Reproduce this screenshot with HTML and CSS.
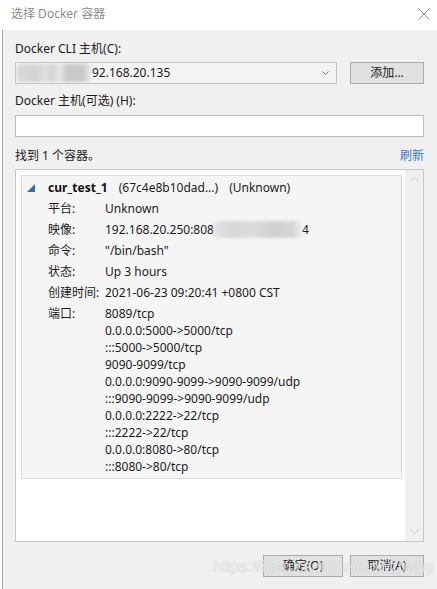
FILE: index.html
```html
<!DOCTYPE html>
<html lang="zh-CN">
<head>
<meta charset="utf-8">
<title>选择 Docker 容器</title>
<link rel="stylesheet" href="styles.css">
</head>
<body>
<div class="window">
  <div class="titlebar">
    <span class="title">选择 Docker 容器</span>
    <svg class="close" width="12" height="12" viewBox="0 0 12 12"><path d="M0.5 0.5 L11.5 11.5 M11.5 0.5 L0.5 11.5" stroke="#9a9a9a" stroke-width="1" fill="none"/></svg>
  </div>
  <div class="main">
    <div class="label l1">Docker CLI 主机(C):</div>
    <div class="row">
      <div class="combo">
        <span class="blur blur-host"></span>
        <span class="combo-text">92.168.20.135</span>
        <svg class="chev" width="7" height="5" viewBox="0 0 7 5"><polyline points="0.5,0.5 3.5,3.5 6.5,0.5" stroke="#707070" stroke-width="1" fill="none"/></svg>
      </div>
      <button class="btn btn-add">添加...</button>
    </div>
    <div class="label l2">Docker 主机(可选) (H):</div>
    <div class="input"></div>
    <div class="found-row">
      <span>找到 1 个容器。</span>
      <span class="refresh">刷新</span>
    </div>
    <div class="listbox">
      <div class="list-content">
        <div class="item">
          <div class="item-head">
            <svg class="tri" width="8" height="8" viewBox="0 0 8 8"><path d="M8 0 L8 8 L0 8 Z" fill="#2f6cb8"/></svg>
            <span class="name">cur_test_1</span>
            <span>(67c4e8b10dad...)</span>
            <span>(Unknown)</span>
          </div>
          <div class="props">
            <div class="prop"><span class="k">平台:</span><span class="v">Unknown</span></div>
            <div class="prop"><span class="k">映像:</span><span class="v">192.168.20.250:808<span class="blur blur-img"></span>4</span></div>
            <div class="prop"><span class="k">命令:</span><span class="v">"/bin/bash"</span></div>
            <div class="prop"><span class="k">状态:</span><span class="v">Up 3 hours</span></div>
            <div class="prop"><span class="k">创建时间:</span><span class="v">2021-06-23 09:20:41 +0800 CST</span></div>
            <div class="prop ports"><span class="k">端口:</span>
              <div class="v port-list">
                <div>8089/tcp</div>
                <div>0.0.0.0:5000-&gt;5000/tcp</div>
                <div>:::5000-&gt;5000/tcp</div>
                <div>9090-9099/tcp</div>
                <div>0.0.0.0:9090-9099-&gt;9090-9099/udp</div>
                <div>:::9090-9099-&gt;9090-9099/udp</div>
                <div>0.0.0.0:2222-&gt;22/tcp</div>
                <div>:::2222-&gt;22/tcp</div>
                <div>0.0.0.0:8080-&gt;80/tcp</div>
                <div>:::8080-&gt;80/tcp</div>
              </div>
            </div>
          </div>
        </div>
      </div>
      <div class="scrollbar">
        <svg width="9" height="5" viewBox="0 0 9 5"><polyline points="0.5,4.5 4.5,0.5 8.5,4.5" stroke="#c6c6c6" stroke-width="1" fill="none"/></svg>
        <svg width="9" height="5" viewBox="0 0 9 5"><polyline points="0.5,0.5 4.5,4.5 8.5,0.5" stroke="#c6c6c6" stroke-width="1" fill="none"/></svg>
      </div>
    </div>
    <div class="actions">
      <button class="btn btn-ok">确定(O)</button>
      <button class="btn btn-cancel">取消(A)</button>
    </div>
  </div>
  <div class="watermark">https://blog.csdn.net/nowzhang</div>
</div>
</body>
</html>
```
FILE: styles.css
```css
html, body {
  margin: 0;
  padding: 0;
}
body {
  background: #f0f0f0;
  font-family: "Noto Sans", "Noto Sans CJK SC", sans-serif;
  font-size: 12px;
  color: #1b1b1b;
}
.window {
  width: 437px;
  height: 589px;
  display: flex;
  flex-direction: column;
  background: #fff;
  position: relative;
  overflow: hidden;
}
.titlebar {
  height: 30px;
  flex: none;
  background: #fff;
  display: flex;
  align-items: center;
  justify-content: space-between;
  padding: 0 7px 0 11px;
  box-sizing: border-box;
}
.title {
  color: #8c8c8c;
  font-size: 12px;
  line-height: 16px;
  margin-top: -2px;
}
.close {
  margin-top: -3px;
}
.main {
  flex: 1;
  display: flex;
  flex-direction: column;
  background: #f0f0f0;
  margin-left: 2px;
  border-left: 1px solid #a8a8a8;
  padding: 11px 13px 0 12px;
}
.label {
  line-height: 16px;
}
.l1 {
  margin-bottom: 5px;
}
.row {
  display: flex;
  gap: 13px;
  height: 22px;
}
.combo {
  flex: 1;
  display: flex;
  align-items: center;
  box-sizing: border-box;
  border: 1px solid #c4c4c4;
  background: #f3f3f3;
  padding: 0 7px 0 1px;
  line-height: 16px;
}
.combo-text {
  flex: 1;
  padding-left: 1px;
}
.blur {
  display: inline-block;
  filter: blur(1.5px);
  border-radius: 4px;
}
.blur-host {
  width: 74px;
  height: 18px;
  background: linear-gradient(90deg, #d9d9d9 0%, #d2d2d2 25%, #dedede 38%, #d4d4d4 48%, #e6e6e6 58%, #c7c7c7 68%, #c9c9c9 88%, #e8e8e8 100%);
}
.blur-img {
  width: 88px;
  height: 17px;
  vertical-align: -4px;
  background: linear-gradient(90deg, #e4e4e4 0%, #d6d6d6 20%, #dcdcdc 45%, #cfcfcf 70%, #d8d8d8 90%, #ececec 100%);
}
.btn {
  font-family: "Noto Sans", "Noto Sans CJK SC", sans-serif;
  font-size: 12px;
  color: #1b1b1b;
  background: #e1e1e1;
  border: 1px solid #adadad;
  height: 22px;
  padding: 0;
  box-sizing: border-box;
  line-height: 16px;
}
.btn-add {
  width: 74px;
}
.l2 {
  margin-top: 9px;
  margin-bottom: 6px;
}
.input {
  height: 22px;
  box-sizing: border-box;
  background: #fff;
  border: 1px solid #bdbdbd;
}
.found-row {
  margin-top: 11px;
  margin-bottom: 5px;
  line-height: 16px;
  display: flex;
  justify-content: space-between;
}
.refresh {
  color: #3a78c6;
}
.listbox {
  height: 373px;
  box-sizing: border-box;
  border: 1px solid #c8c8c8;
  background: #fff;
  display: flex;
}
.list-content {
  flex: 1;
  padding: 5px 3px 0 5px;
}
.item {
  background: #f5f5f5;
  border: 1px solid #dcdcdc;
  padding: 1px 0 3px 5px;
}
.item-head {
  display: flex;
  align-items: center;
  line-height: 21px;
  gap: 11px;
}
.tri {
  margin-right: 2px;
}
.name {
  font-weight: bold;
  color: #111;
}
.props {
  margin-left: 21px;
}
.prop {
  display: grid;
  grid-template-columns: 57px 1fr;
  line-height: 21px;
}
.v {
  white-space: nowrap;
}
.ports {
  line-height: 17px;
  padding-top: 2px;
}
.scrollbar {
  width: 18px;
  flex: none;
  background: #f0f0f0;
  display: flex;
  flex-direction: column;
  justify-content: space-between;
  align-items: center;
  padding: 7px 0 7px 1px;
  box-sizing: border-box;
}
.actions {
  margin-top: 13px;
  display: flex;
  justify-content: flex-end;
  gap: 7px;
}
.btn-ok {
  width: 80px;
}
.btn-cancel {
  width: 74px;
}
.watermark {
  position: absolute;
  left: 213px;
  top: 557px;
  font-family: "Liberation Sans", sans-serif;
  font-size: 16px;
  line-height: 20px;
  color: rgba(255, 255, 255, 0.7);
  text-shadow: 0 0 1px rgba(120, 120, 120, 0.45);
  white-space: nowrap;
  pointer-events: none;
}
```
